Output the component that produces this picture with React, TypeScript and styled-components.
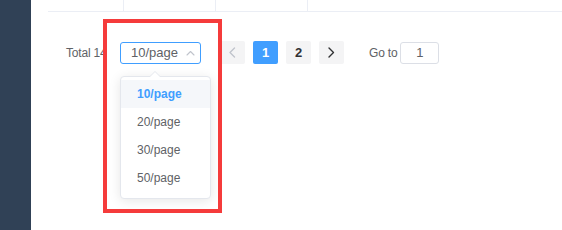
import * as React from "react";
import styled, { createGlobalStyle } from "styled-components";

const GlobalStyle = createGlobalStyle`
  html, body {
    margin: 0;
    padding: 0;
    background: #fff;
  }
  body {
    font-family: "Liberation Sans", Arial, Helvetica, sans-serif;
    color: #606266;
  }
`;

const Layout = styled.div`
  display: flex;
  width: 562px;
  height: 230px;
  overflow: hidden;
  position: relative;
`;

const Sidebar = styled.aside`
  width: 31px;
  flex-shrink: 0;
  background: #304156;
`;

const Main = styled.main`
  flex: 1;
  padding-left: 17px;
  display: flex;
  flex-direction: column;
`;

const TableHead = styled.div`
  display: flex;
  height: 11px;
  border-bottom: 1px solid #ebeef5;
`;

const HeadCell = styled.div<{ $w?: number }>`
  width: ${(p) => (p.$w ? `${p.$w}px` : "auto")};
  flex: ${(p) => (p.$w ? "none" : "1")};
  border-right: ${(p) => (p.$w ? "1px solid #ebeef5" : "none")};
  box-sizing: border-box;
`;

const Pagination = styled.div`
  display: flex;
  align-items: center;
  margin-top: 29px;
  padding-left: 18px;
  height: 23px;
`;

const Label = styled.span`
  font-size: 12px;
  letter-spacing: -0.2px;
  color: #606266;
  white-space: nowrap;
`;

const Total = styled(Label)`
  width: 44px;
  margin-right: 10px;
`;

const SelectWrap = styled.div`
  position: relative;
  margin-right: 19px;
`;

const SelectBox = styled.div`
  width: 81px;
  height: 22px;
  box-sizing: border-box;
  border: 1px solid #409eff;
  border-radius: 3px;
  display: flex;
  align-items: center;
  justify-content: space-between;
  padding: 0 5px 0 10px;
  font-size: 13px;
  color: #606266;
`;

const Dropdown = styled.div`
  position: absolute;
  left: 0;
  top: 34px;
  width: 91px;
  box-sizing: border-box;
  background: #fff;
  border: 1px solid #e4e7ed;
  border-radius: 4px;
  box-shadow: 0 2px 12px rgba(0, 0, 0, 0.1);
  padding: 3px 0 6px;
  z-index: 2;

  &::before,
  &::after {
    content: "";
    position: absolute;
    left: 28px;
    width: 0;
    height: 0;
    border: 6px solid transparent;
    border-top: 0;
  }
  &::before {
    top: -6px;
    border-bottom-color: #e4e7ed;
  }
  &::after {
    top: -5px;
    border-bottom-color: #fff;
  }
`;

const Option = styled.div<{ $active?: boolean }>`
  height: 28px;
  line-height: 28px;
  padding-left: 16px;
  font-size: 12px;
  color: ${(p) => (p.$active ? "#409eff" : "#606266")};
  font-weight: ${(p) => (p.$active ? 700 : 400)};
  background: ${(p) => (p.$active ? "#f5f7fa" : "transparent")};
`;

const Pager = styled.div`
  display: flex;
  gap: 8px;
  margin-right: 25px;
`;

const PageBtn = styled.div<{ $active?: boolean; $disabled?: boolean }>`
  width: 25px;
  height: 23px;
  border-radius: 2px;
  display: flex;
  align-items: center;
  justify-content: center;
  font-size: 13px;
  font-weight: 700;
  background: ${(p) => (p.$active ? "#409eff" : "#f4f4f5")};
  color: ${(p) => (p.$active ? "#fff" : p.$disabled ? "#c0c4cc" : "#303133")};
`;

const JumpInput = styled.div`
  width: 39px;
  height: 22px;
  box-sizing: border-box;
  margin-left: 3px;
  border: 1px solid #dcdfe6;
  border-radius: 3px;
  display: flex;
  align-items: center;
  justify-content: center;
  font-size: 13px;
  color: #606266;
`;

const Highlight = styled.div`
  position: absolute;
  left: 103px;
  top: 19px;
  width: 119px;
  height: 194px;
  box-sizing: border-box;
  border: 4px solid #f53b3b;
  pointer-events: none;
  z-index: 3;
`;

const Chevron = ({ dir, color }: { dir: "up" | "left" | "right"; color: string }) => {
  const pts =
    dir === "up" ? "1,5 4.5,1.5 8,5" : dir === "left" ? "5.5,1 1,5.5 5.5,10" : "1,1 5.5,5.5 1,10";
  const w = dir === "up" ? 9 : 7;
  const h = dir === "up" ? 6 : 11;
  return (
    <svg width={w} height={h} viewBox={`0 0 ${w} ${h}`} fill="none">
      <polyline
        points={pts}
        stroke={color}
        strokeWidth={dir === "up" ? 1.1 : 1.4}
        strokeLinecap="round"
        strokeLinejoin="round"
      />
    </svg>
  );
};

const sizes = ["10/page", "20/page", "30/page", "50/page"];

export default function App() {
  return (
    <>
      <GlobalStyle />
      <Layout>
        <Sidebar />
        <Main>
          <TableHead>
            <HeadCell $w={76} />
            <HeadCell $w={92} />
            <HeadCell $w={92} />
            <HeadCell />
          </TableHead>
          <Pagination>
            <Total>Total 14</Total>
            <SelectWrap>
              <SelectBox>
                <span>10/page</span>
                <Chevron dir="up" color="#c0c4cc" />
              </SelectBox>
              <Dropdown>
                {sizes.map((s, i) => (
                  <Option key={s} $active={i === 0}>
                    {s}
                  </Option>
                ))}
              </Dropdown>
            </SelectWrap>
            <Pager>
              <PageBtn $disabled>
                <Chevron dir="left" color="#c0c4cc" />
              </PageBtn>
              <PageBtn $active>1</PageBtn>
              <PageBtn>2</PageBtn>
              <PageBtn>
                <Chevron dir="right" color="#303133" />
              </PageBtn>
            </Pager>
            <Label>Go to</Label>
            <JumpInput>1</JumpInput>
          </Pagination>
        </Main>
        <Highlight />
      </Layout>
    </>
  );
}
